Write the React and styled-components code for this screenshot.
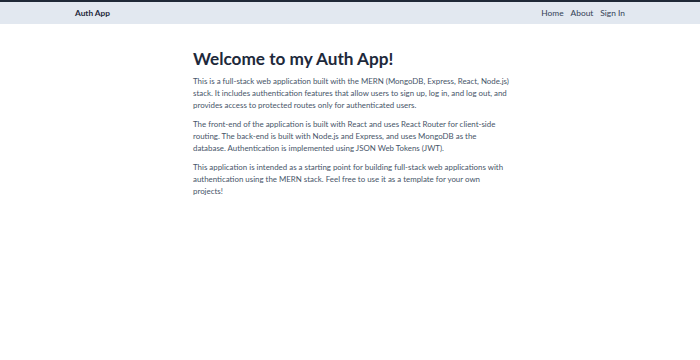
import React from "react";
import styled, { createGlobalStyle } from "styled-components";

const GlobalStyle = createGlobalStyle`
  html, body {
    margin: 0;
    padding: 0;
    background: #ffffff;
  }
  body {
    font-family: Lato, "Noto Sans", "Liberation Sans", sans-serif;
    border-top: 2px solid #1f2937;
  }
`;

const Header = styled.header`
  background: #e2e8f0;
`;

const HeaderInner = styled.div`
  display: flex;
  justify-content: space-between;
  align-items: center;
  max-width: 550px;
  margin: 0 auto;
  height: 22px;
`;

const Brand = styled.h1`
  margin: 0;
  font-size: 8.3px;
  font-weight: 700;
  color: #1e293b;
`;

const Nav = styled.ul`
  display: flex;
  gap: 7px;
  list-style: none;
  margin: 0;
  padding: 0 0 0 2px;
`;

const NavItem = styled.li`
  font-size: 8.4px;
  color: #334155;
`;

const Main = styled.main`
  max-width: 314px;
  margin: 0 auto;
  padding: 24px 0 0;
`;

const Title = styled.h2`
  margin: 0 0 6px;
  font-size: 17.2px;
  font-weight: 700;
  color: #1e293b;
`;

const Paragraph = styled.p`
  margin: 0 -2px 7px 0;
  font-size: 7.9px;
  line-height: 12px;
  color: #475569;
`;

export default function App() {
  return (
    <>
      <GlobalStyle />
      <Header>
        <HeaderInner>
          <Brand>Auth App</Brand>
          <Nav>
            <NavItem>Home</NavItem>
            <NavItem>About</NavItem>
            <NavItem>Sign In</NavItem>
          </Nav>
        </HeaderInner>
      </Header>
      <Main>
        <Title>Welcome to my Auth App!</Title>
        <Paragraph>
          This is a full-stack web application built with the MERN (MongoDB,
          Express, React, Node.js) stack. It includes authentication features
          that allow users to sign up, log in, and log out, and provides access
          to protected routes only for authenticated users.
        </Paragraph>
        <Paragraph>
          The front-end of the application is built with React and uses React
          Router for client-side routing. The back-end is built with Node.js and
          Express, and uses MongoDB as the database. Authentication is
          implemented using JSON Web Tokens (JWT).
        </Paragraph>
        <Paragraph>
          This application is intended as a starting point for building
          full-stack web applications with authentication using the MERN stack.
          Feel free to use it as a template for your own projects!
        </Paragraph>
      </Main>
    </>
  );
}
